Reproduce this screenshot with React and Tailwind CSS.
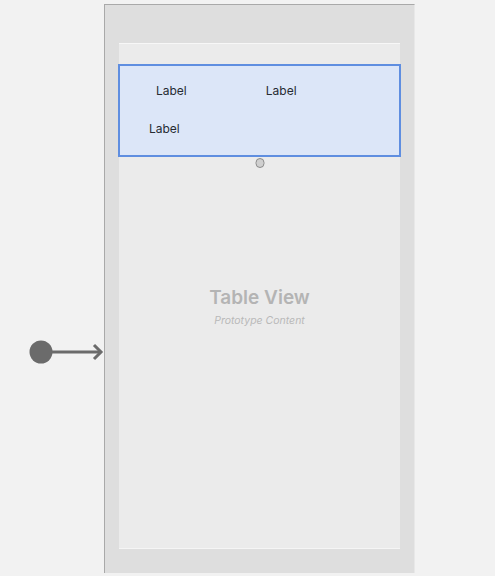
import React from "react";

function EntryArrow() {
  return (
    <svg width="76" height="26" viewBox="0 0 76 26" className="absolute left-[28px] top-[339px]">
      <circle cx="13" cy="13" r="11.5" fill="#6b6b6b" />
      <line x1="22" y1="13" x2="73" y2="13" stroke="#6b6b6b" strokeWidth="3" />
      <polyline points="66,6 73,13 66,20" fill="none" stroke="#6b6b6b" strokeWidth="3" strokeLinejoin="miter" />
    </svg>
  );
}

export default function App() {
  return (
    <div
      className="relative w-[495px] h-[576px] bg-[#f2f2f2] overflow-hidden"
      style={{ fontFamily: "Inter, 'Liberation Sans', sans-serif" }}
    >
      <EntryArrow />

      {/* Scene */}
      <div className="ml-[104px] mt-[4px] w-[311px] h-[569px] bg-[#dedede] border-t border-l border-[#a9a9a9] border-r border-r-[#e8e8e8] pt-[38px] pl-[14px]">
        {/* Table view */}
        <div className="relative w-[281px] h-[506px] bg-[#ebebeb] border-t border-[#f7f7f7] border-b border-b-[#f5f5f5] pt-[20px]">
          {/* Prototype cell */}
          <div className="relative -mx-px h-[93px] bg-[#dce6f8] border-2 border-[#5f8ee0] text-[12px] text-[#262b33]">
            <div className="flex pt-[16px] pl-[36px]">
              <span>Label</span>
              <span className="ml-[79px]">Label</span>
            </div>
            <div className="pt-[20px] pl-[29px]">
              <span>Label</span>
            </div>
            <div className="absolute left-1/2 -translate-x-1/2 -bottom-[13px] w-[9px] h-[10px] rounded-full bg-[#cfcfcf] border border-[#8c8c8c]" />
          </div>

          <div className="flex flex-col items-center mt-[131px]">
            <span className="text-[19px] font-semibold leading-none text-[#b4b4b4]">Table View</span>
            <span className="mt-[9px] text-[10.5px] italic leading-none text-[#b9b9b9]">Prototype Content</span>
          </div>
        </div>
      </div>
    </div>
  );
}
